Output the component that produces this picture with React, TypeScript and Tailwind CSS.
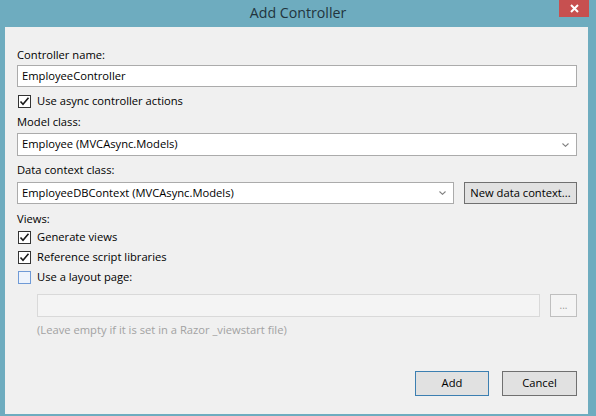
import * as React from "react";

const font = { fontFamily: '"Open Sans", "Noto Sans", Arial, sans-serif' };

// small square checkbox in the old Windows 8 style
const CheckBox = ({ checked, focused }: { checked?: boolean; focused?: boolean }) => (
  <span
    className={
      focused
        ? "w-[13px] h-[13px] border border-[#6f9ad6] bg-[#edf3fc] flex items-center justify-center"
        : "w-[13px] h-[13px] border border-[#333333] bg-white flex items-center justify-center"
    }
  >
    {checked && (
      <svg width="11" height="11" viewBox="0 0 11 11">
        <path d="M1.5 5.5 L4 8.3 L9.5 1.8" fill="none" stroke="#1a1a1a" strokeWidth="1.6" />
      </svg>
    )}
  </span>
);

const Chevron = () => (
  <svg width="7" height="4" viewBox="0 0 7 4">
    <path d="M0.5 0.5 L3.5 3.3 L6.5 0.5" fill="none" stroke="#808080" strokeWidth="1.1" />
  </svg>
);

const CheckRow = ({
  label,
  checked,
  focused,
  className,
}: {
  label: string;
  checked?: boolean;
  focused?: boolean;
  className?: string;
}) => (
  <div className={"flex items-center h-[16px] pl-px " + (className ?? "")}>
    <CheckBox checked={checked} focused={focused} />
    <span className="ml-[6px] text-[11.2px] leading-[16px] text-black">{label}</span>
  </div>
);

export default function App() {
  return (
    <div className="w-[596px] h-[416px] bg-[#6eacbf] flex flex-col overflow-hidden" style={font}>
      {/* title bar */}
      <div className="relative h-[27px] flex items-center justify-center">
        <span className="text-[14.2px] leading-[20px] text-[#22343d] -mt-[2px]">Add Controller</span>
        <div className="absolute top-0 right-[7px] w-[30px] h-[17px] bg-[#c75050] flex items-center justify-center">
          <svg width="9" height="9" viewBox="0 0 9 9">
            <path d="M1 1 L8 8 M8 1 L1 8" stroke="white" strokeWidth="2" />
          </svg>
        </div>
      </div>

      {/* client area */}
      <div className="flex-1 ml-[5px] mr-[8px] mb-[2px] bg-[#f0f0f0] pl-[12px] pr-[11px] pt-[20px] flex flex-col">
        <div className="text-[11.2px] leading-[16px] text-black">Controller name:</div>
        <div className="mt-[2px] h-[22px] border border-[#ababab] bg-white flex items-center px-[4px] text-[11.2px] text-black">
          EmployeeController
        </div>
        <CheckRow label="Use async controller actions" checked className="mt-[6px]" />

        <div className="mt-[5px] text-[11.2px] leading-[16px] text-black">Model class:</div>
        <div className="mt-[3px] h-[23px] border border-[#ababab] bg-white flex items-center justify-between pl-[4px] pr-[7px] text-[11.2px] text-black">
          <span>Employee (MVCAsync.Models)</span>
          <Chevron />
        </div>

        <div className="mt-[6px] text-[11.2px] leading-[16px] text-black">Data context class:</div>
        <div className="mt-[4px] flex gap-[10px]">
          <div className="flex-1 h-[22px] border border-[#ababab] bg-white flex items-center justify-between pl-[4px] pr-[7px] text-[11.2px] text-black">
            <span>EmployeeDBContext (MVCAsync.Models)</span>
            <Chevron />
          </div>
          <div className="w-[113px] h-[22px] border border-[#707070] bg-[#e1e1e1] flex items-center justify-center text-[11.2px] text-black">
            New data context...
          </div>
        </div>

        <div className="mt-[7px] text-[11.2px] leading-[16px] text-black">Views:</div>
        <CheckRow label="Generate views" checked className="mt-[2px]" />
        <CheckRow label="Reference script libraries" checked className="mt-[4px]" />
        <CheckRow label="Use a layout page:" focused className="mt-[4px]" />

        <div className="mt-[9px] pl-[20px] flex gap-[10px]">
          <div className="flex-1 h-[23px] border border-[#d9d9d9] bg-[#f4f4f4]" />
          <div className="w-[27px] h-[23px] border border-[#bfbfbf] bg-[#f4f4f4] flex items-center justify-center text-[10px] text-[#9a9a9a]">
            ...
          </div>
        </div>
        <div className="mt-[5px] pl-[20px] text-[11.2px] leading-[16px] text-[#a2a2a2]">
          (Leave empty if it is set in a Razor _viewstart file)
        </div>

        <div className="mt-[33px] flex justify-end gap-[13px]">
          <div className="w-[74px] h-[25px] border border-[#3c7fb1] bg-[#e1e1e1] flex items-center justify-center text-[11.2px] text-black">
            Add
          </div>
          <div className="w-[75px] h-[25px] border border-[#707070] bg-[#e1e1e1] flex items-center justify-center text-[11.2px] text-black">
            Cancel
          </div>
        </div>
      </div>
    </div>
  );
}
